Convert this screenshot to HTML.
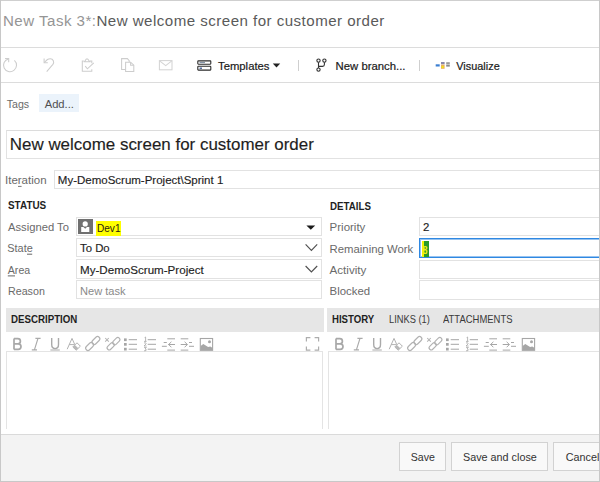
<!DOCTYPE html>
<html><head><meta charset="utf-8"><style>
html,body{margin:0;padding:0;background:#fff;}
body{width:600px;height:482px;position:relative;overflow:hidden;font-family:"Liberation Sans",sans-serif;}
.t{position:absolute;white-space:pre;line-height:20px;}
.r{position:absolute;box-sizing:border-box;}
svg{position:absolute;overflow:visible;}
</style></head><body>
<!-- frame -->
<div class="r" style="left:0;top:0;width:600px;height:1px;background:#cfcfcf"></div>
<div class="r" style="left:0;top:0;width:1px;height:482px;background:#c8c8c8"></div>
<div class="r" style="left:599px;top:0;width:1px;height:482px;background:#c8c8c8;z-index:5"></div>
<div class="r" style="left:1px;top:47px;width:598px;height:1px;background:#dcdcdc"></div>
<div class="r" style="left:1px;top:82px;width:598px;height:1px;background:#dcdcdc"></div>
<!-- footer -->
<div class="r" style="left:1px;top:434px;width:598px;height:47px;background:#f3f3f3;border-top:1px solid #dadada"></div>
<div class="r" style="left:0;top:481px;width:600px;height:1px;background:#c8c8c8"></div>
<div class="r" style="left:399px;top:442px;width:47px;height:29px;background:#f9f9f9;border:1px solid #d2d2d2"></div>
<div class="r" style="left:451px;top:442px;width:97px;height:29px;background:#f9f9f9;border:1px solid #d2d2d2"></div>
<div class="r" style="left:553px;top:442px;width:60px;height:29px;background:#f9f9f9;border:1px solid #d2d2d2"></div>
<!-- tags add -->
<div class="r" style="left:39px;top:94px;width:40px;height:18px;background:#ebf3fb"></div>
<!-- title input -->
<div class="r" style="left:6px;top:130px;width:600px;height:29px;border:1px solid #e2e2e2;border-top-color:#dcdcdc"></div>
<!-- iteration -->
<div class="r" style="left:54px;top:170px;width:560px;height:19px;border:1px solid #e2e2e2"></div>
<!-- status boxes -->
<div class="r" style="left:76px;top:217px;width:246px;height:19px;border:1px solid #e2e2e2"></div>
<div class="r" style="left:76px;top:238px;width:246px;height:19px;border:1px solid #e2e2e2"></div>
<div class="r" style="left:76px;top:259px;width:246px;height:20px;border:1px solid #e2e2e2"></div>
<div class="r" style="left:76px;top:280px;width:246px;height:19px;border:1px solid #e2e2e2"></div>
<!-- details boxes -->
<div class="r" style="left:419px;top:217px;width:200px;height:19px;border:1px solid #e2e2e2"></div>
<div class="r" style="left:419px;top:238px;width:200px;height:20px;border:1px solid #2f88e2;box-shadow:inset 0 0 0 1px rgba(47,136,226,0.5)"></div>
<div class="r" style="left:419px;top:260px;width:200px;height:19px;border:1px solid #e2e2e2"></div>
<div class="r" style="left:419px;top:280px;width:200px;height:20px;border:1px solid #e2e2e2"></div>
<!-- selection 8 -->
<div class="r" style="left:422px;top:241px;width:6.6px;height:16px;background:#2a9a28"></div>
<div class="r" style="left:422px;top:241px;width:1.6px;height:16px;background:#f2f200"></div>
<svg style="left:0;top:0" width="600" height="300"><text x="0" y="0" font-family="Liberation Sans" font-size="11.5" font-weight="700" fill="#f0f010" transform="translate(422.4 254.4) scale(0.78 1)">8</text></svg>
<!-- assigned avatar + highlight -->
<div class="r" style="left:78px;top:219px;width:15px;height:15px;background:#707070"></div>
<svg style="left:78px;top:219px" width="15" height="15"><circle cx="7.2" cy="4.9" r="2.6" fill="#fff"/><path d="M3.2 13 V8.1 H5.4 L7.2 9.7 L9 8.1 H11.3 V13 Z" fill="#fff"/></svg>
<div class="r" style="left:95.5px;top:221px;width:25px;height:15px;background:#ffff00"></div>
<!-- dropdown carets -->
<svg style="left:0;top:0" width="600" height="300">
 <path d="M306.4 225.5 H315.2 L310.8 229.8 Z" fill="#1a1a1a"/>
 <path d="M305.6 244.4 L311.4 250.4 L317.2 244.4" stroke="#505050" stroke-width="1.15" fill="none"/>
 <path d="M305.6 266.0 L311.4 272.0 L317.2 266.0" stroke="#505050" stroke-width="1.15" fill="none"/>
 <!-- accelerator underlines -->
 <path d="M18 186.4 H21.6" stroke="#777" stroke-width="1"/>
 <path d="M27 254.2 H32.2" stroke="#666" stroke-width="1"/>
 <path d="M7.8 275.9 H15" stroke="#666" stroke-width="1"/>
</svg>
<!-- section headers -->
<div class="r" style="left:6px;top:308px;width:318px;height:24px;background:#e6e6e6"></div>
<div class="r" style="left:327px;top:308px;width:272px;height:24px;background:#e6e6e6"></div>
<!-- editor boxes -->
<div class="r" style="left:6px;top:351px;width:317px;height:78px;border:1px solid #e4e4e4;border-bottom:none"></div>
<div class="r" style="left:328px;top:351px;width:280px;height:78px;border:1px solid #e4e4e4;border-bottom:none"></div>
<!-- separators toolbar -->
<div class="r" style="left:298px;top:60px;width:1px;height:11px;background:#cfcfcf"></div>
<div class="r" style="left:419px;top:60px;width:1px;height:11px;background:#cfcfcf"></div>
<!-- toolbar icons -->
<svg style="left:0;top:0" width="600" height="90">
 <g fill="none" stroke="#cdcdcd" stroke-width="1.05">
  <!-- refresh -->
  <path d="M14.4 60.4 A6.5 6.5 0 1 1 8.4 58.9"/>
  <path d="M5 58.5 H8.7 V62.3"/>
  <!-- undo -->
  <path d="M44.4 62.3 L47.4 59.5 Q48.6 58.7 50.4 58.7 A3.3 3.5 0 0 1 52.9 64.4 L46.7 71.6"/>
  <path d="M44.1 58.4 V62.7 H47.8"/>
  <!-- clipboard -->
  <path d="M83.8 60.9 H82.3 V71.3 H91.8 V69.2"/>
  <path d="M90 60.9 H91.8 V63.2"/>
  <path d="M83.6 61.7 H90.6 M84.6 61.5 L86.3 58.9 H87.7 L89.6 61.5"/>
  <path d="M85.2 66.2 L87.4 68.8 L93.8 62.8"/>
  <!-- copy -->
  <path d="M125.6 69.4 H121.6 V58.6 H127.4 L129.2 60.6 V62.2"/>
  <path d="M125.6 62.2 H130.6 L133.8 65.2 V71.4 H125.6 Z"/>
  <path d="M130.6 62.2 V65.2 H133.8"/>
  <!-- mail -->
  <rect x="159.4" y="60.6" width="12.6" height="9.2" stroke="#d4d4d4"/>
  <path d="M159.6 60.8 L165.7 65.6 L171.8 60.8" stroke="#d4d4d4"/>
 </g>
 <!-- templates icon -->
 <g fill="none" stroke="#2a2a2a" stroke-width="1.1">
  <rect x="197.8" y="60.9" width="13" height="3.3" rx="0.6"/>
  <rect x="197.8" y="66.3" width="13" height="3.8" rx="0.6"/>
 </g>
 <path d="M199.6 62.6 H205" stroke="#7a8aa0" stroke-width="1"/>
 <path d="M199.6 68.2 H202" stroke="#2a4a8a" stroke-width="1.2"/>
 <!-- caret -->
 <path d="M272.8 63.6 H280.2 L276.5 67.4 Z" fill="#222"/>
 <!-- branch -->
 <g fill="none" stroke="#333" stroke-width="1.1">
  <circle cx="318.5" cy="60.6" r="1.65"/>
  <circle cx="324.4" cy="60.6" r="1.65"/>
  <circle cx="318.5" cy="69.6" r="1.65"/>
  <path d="M318.5 62.3 V67.9"/>
  <path d="M324.4 62.3 V64.6 Q324.4 66.4 322.6 66.4 H318.5"/>
 </g>
 <!-- visualize -->
 <rect x="435.7" y="64.3" width="4" height="2.2" fill="#3b7fd2"/>
 <rect x="441" y="62" width="3.6" height="2.3" fill="#8a88a8"/>
 <rect x="441" y="64.6" width="3.6" height="4.2" fill="#e8b060"/>
 <circle cx="442.6" cy="67" r="1" fill="#f4f000"/>
 <rect x="446.2" y="62.2" width="3.6" height="2" fill="#9a9a9a"/>
 <rect x="446.2" y="64.6" width="3.6" height="2" fill="#8a8a8a"/>
</svg>
<!-- editor toolbars -->
<svg style="left:0;top:330px" width="600" height="24">
 <g>
   <path d="M14 8.6 V19.4 M14 8.6 H17.8 Q20.4 8.6 20.4 11.2 Q20.4 13.8 17.8 13.8 H14 M14 13.8 H18.2 Q21 13.8 21 16.6 Q21 19.4 18.2 19.4 H14" stroke="#a8a8a8" stroke-width="1.7" fill="none"/>
   <path d="M35.4 8.4 H40.6 M31.8 19.8 H37 M38 8.4 L34.4 19.8" stroke="#aaaaaa" stroke-width="1.15" fill="none"/>
   <path d="M51.7 8 V14.6 Q51.7 18.6 55.1 18.6 Q58.5 18.6 58.5 14.6 V8" stroke="#aaaaaa" stroke-width="1.4" fill="none"/>
   <path d="M50.4 20 H59.8" stroke="#aaaaaa" stroke-width="1"/>
   <path d="M67.2 19.2 L72 8.4 L75.6 16.4 M69.2 14.6 H74" stroke="#b2b2b2" stroke-width="1" fill="none"/>
   <path d="M72.8 17 L77 12.8 L80.4 16.2 L76.2 20.2 Z" stroke="#b2b2b2" stroke-width="1" fill="#fff"/>
   <path d="M72.8 17 L74.9 14.9 L78.3 18.3 L76.2 20.2 Z" fill="#b8b8b8"/>
   <g stroke="#b2b2b2" stroke-width="1.15" fill="none">
    <rect x="87.3" y="11.9" width="4.6" height="9.2" rx="2.3" transform="rotate(45 89.6 16.5)"/>
    <rect x="93.6" y="5.9" width="4.6" height="9.2" rx="2.3" transform="rotate(45 95.9 10.5)"/>
    <rect x="108.6" y="12.1" width="4.2" height="8.4" rx="2.1" transform="rotate(45 110.7 16.3)"/>
    <rect x="114.2" y="6.9" width="4.2" height="8.4" rx="2.1" transform="rotate(45 116.3 11.1)"/>
    <path d="M105.2 8 L108.8 11.6 M108.8 8 L105.2 11.6" stroke-width="1.05"/>
   </g>
   <g fill="#a6a6a6">
    <rect x="124" y="8.4" width="2.7" height="2.7"/><rect x="124" y="13" width="2.7" height="2.7"/><rect x="124" y="17.8" width="2.7" height="2.7"/>
   </g>
   <path d="M128.7 9.7 H137 M128.7 14.3 H137 M128.7 19.2 H137 M147.7 9.7 H156 M147.7 14.3 H156 M147.7 19.2 H156" stroke="#a6a6a6" stroke-width="1"/>
   <path d="M144.6 7.6 L145.6 7 V11.4 M144 11.4 H146.6 M144 13 Q146.2 12.2 146.2 13.8 L144 16 H146.6 M144 17.6 H146.4 L145 18.8 Q146.8 19 146 20.6 L144 20.8" stroke="#a6a6a6" stroke-width="0.8" fill="none"/>
   <path d="M167.3 8.8 H175 M167.3 20.1 H175 M163.7 12.5 H166.8 M161.9 16.3 H166.8 M168.3 14.5 H175 M171.4 11.8 L168.6 14.5 L171.4 17.3" stroke="#a6a6a6" stroke-width="1" fill="none"/>
   <path d="M180.7 8.8 H188.3 M180.7 20.1 H188.3 M189 12.5 H192 M189 16.3 H194 M180.7 14.5 H187.3 M184.6 11.8 L187.4 14.5 L184.6 17.3" stroke="#a6a6a6" stroke-width="1" fill="none"/>
   <rect x="200.3" y="8.5" width="12.3" height="11.8" stroke="#a6a6a6" stroke-width="1.1" fill="none"/>
   <path d="M200.6 20.2 V16 L203.3 14 L208.1 16.9 L210.2 16.5 L212.4 17.8 V20.2 Z" fill="#a6a6a6"/>
   <circle cx="209.5" cy="11.7" r="1.5" fill="#a6a6a6"/>
</g>
 <g transform="translate(322 0)">
   <path d="M14 8.6 V19.4 M14 8.6 H17.8 Q20.4 8.6 20.4 11.2 Q20.4 13.8 17.8 13.8 H14 M14 13.8 H18.2 Q21 13.8 21 16.6 Q21 19.4 18.2 19.4 H14" stroke="#a8a8a8" stroke-width="1.7" fill="none"/>
   <path d="M35.4 8.4 H40.6 M31.8 19.8 H37 M38 8.4 L34.4 19.8" stroke="#aaaaaa" stroke-width="1.15" fill="none"/>
   <path d="M51.7 8 V14.6 Q51.7 18.6 55.1 18.6 Q58.5 18.6 58.5 14.6 V8" stroke="#aaaaaa" stroke-width="1.4" fill="none"/>
   <path d="M50.4 20 H59.8" stroke="#aaaaaa" stroke-width="1"/>
   <path d="M67.2 19.2 L72 8.4 L75.6 16.4 M69.2 14.6 H74" stroke="#b2b2b2" stroke-width="1" fill="none"/>
   <path d="M72.8 17 L77 12.8 L80.4 16.2 L76.2 20.2 Z" stroke="#b2b2b2" stroke-width="1" fill="#fff"/>
   <path d="M72.8 17 L74.9 14.9 L78.3 18.3 L76.2 20.2 Z" fill="#b8b8b8"/>
   <g stroke="#b2b2b2" stroke-width="1.15" fill="none">
    <rect x="87.3" y="11.9" width="4.6" height="9.2" rx="2.3" transform="rotate(45 89.6 16.5)"/>
    <rect x="93.6" y="5.9" width="4.6" height="9.2" rx="2.3" transform="rotate(45 95.9 10.5)"/>
    <rect x="108.6" y="12.1" width="4.2" height="8.4" rx="2.1" transform="rotate(45 110.7 16.3)"/>
    <rect x="114.2" y="6.9" width="4.2" height="8.4" rx="2.1" transform="rotate(45 116.3 11.1)"/>
    <path d="M105.2 8 L108.8 11.6 M108.8 8 L105.2 11.6" stroke-width="1.05"/>
   </g>
   <g fill="#a6a6a6">
    <rect x="124" y="8.4" width="2.7" height="2.7"/><rect x="124" y="13" width="2.7" height="2.7"/><rect x="124" y="17.8" width="2.7" height="2.7"/>
   </g>
   <path d="M128.7 9.7 H137 M128.7 14.3 H137 M128.7 19.2 H137 M147.7 9.7 H156 M147.7 14.3 H156 M147.7 19.2 H156" stroke="#a6a6a6" stroke-width="1"/>
   <path d="M144.6 7.6 L145.6 7 V11.4 M144 11.4 H146.6 M144 13 Q146.2 12.2 146.2 13.8 L144 16 H146.6 M144 17.6 H146.4 L145 18.8 Q146.8 19 146 20.6 L144 20.8" stroke="#a6a6a6" stroke-width="0.8" fill="none"/>
   <path d="M167.3 8.8 H175 M167.3 20.1 H175 M163.7 12.5 H166.8 M161.9 16.3 H166.8 M168.3 14.5 H175 M171.4 11.8 L168.6 14.5 L171.4 17.3" stroke="#a6a6a6" stroke-width="1" fill="none"/>
   <path d="M180.7 8.8 H188.3 M180.7 20.1 H188.3 M189 12.5 H192 M189 16.3 H194 M180.7 14.5 H187.3 M184.6 11.8 L187.4 14.5 L184.6 17.3" stroke="#a6a6a6" stroke-width="1" fill="none"/>
   <rect x="200.3" y="8.5" width="12.3" height="11.8" stroke="#a6a6a6" stroke-width="1.1" fill="none"/>
   <path d="M200.6 20.2 V16 L203.3 14 L208.1 16.9 L210.2 16.5 L212.4 17.8 V20.2 Z" fill="#a6a6a6"/>
   <circle cx="209.5" cy="11.7" r="1.5" fill="#a6a6a6"/>
</g>
 <path d="M306.4 341.5 V337.6 H310.4 M314.6 337.6 H318.6 V341.5 M318.6 346.4 V350.2 H314.6 M310.4 350.2 H306.4 V346.4" transform="translate(0 -330)" stroke="#adadad" stroke-width="1.2" fill="none"/>
</svg>

<div class="t" style="left:3.00px;top:11.30px;font-size:15.1px;font-weight:400;color:#555;letter-spacing:0.47px;"><span style="color:#959595">New Task 3*:</span><span style="color:#5a5a5a">New welcome screen for customer order</span></div>
<div class="t" style="left:218.00px;top:55.60px;font-size:11.31px;font-weight:400;color:#1a1a1a;-webkit-text-stroke:0.2px #1a1a1a;">Templates</div>
<div class="t" style="left:335.60px;top:56.00px;font-size:11.33px;font-weight:400;color:#1a1a1a;-webkit-text-stroke:0.2px #1a1a1a;">New branch...</div>
<div class="t" style="left:456.30px;top:55.60px;font-size:10.9px;font-weight:400;color:#1a1a1a;-webkit-text-stroke:0.2px #1a1a1a;">Visualize</div>
<div class="t" style="left:6.70px;top:93.50px;font-size:10.6px;font-weight:400;color:#6a6a6a;">Tags</div>
<div class="t" style="left:44.70px;top:93.50px;font-size:11.2px;font-weight:400;color:#505050;">Add...</div>
<div class="t" style="left:9.80px;top:135.00px;font-size:16.95px;font-weight:400;color:#1e1e1e;-webkit-text-stroke:0.15px #1e1e1e;">New welcome screen for customer order</div>
<div class="t" style="left:5.00px;top:170.00px;font-size:11.5px;font-weight:400;color:#6a6a6a;">Iteration</div>
<div class="t" style="left:57.80px;top:170.00px;font-size:11.51px;font-weight:400;color:#1e1e1e;-webkit-text-stroke:0.15px #1e1e1e;">My-DemoScrum-Project\Sprint 1</div>
<div class="t" style="left:7.60px;top:195.40px;font-size:10.6px;font-weight:700;color:#1e1e1e;transform:scaleX(0.9370);transform-origin:0 0;">STATUS</div>
<div class="t" style="left:8.00px;top:217.40px;font-size:11.22px;font-weight:400;color:#6a6a6a;">Assigned To</div>
<div class="t" style="left:97.20px;top:217.70px;font-size:11.2px;font-weight:400;color:#2a1a10;transform:scaleX(0.9000);transform-origin:0 0;">Dev1</div>
<div class="t" style="left:7.30px;top:238.20px;font-size:10.9px;font-weight:400;color:#6a6a6a;">State</div>
<div class="t" style="left:80.00px;top:238.20px;font-size:11.35px;font-weight:400;color:#1e1e1e;-webkit-text-stroke:0.15px #1e1e1e;">To Do</div>
<div class="t" style="left:7.80px;top:259.60px;font-size:10.6px;font-weight:400;color:#6a6a6a;">Area</div>
<div class="t" style="left:80.00px;top:259.60px;font-size:11.6px;font-weight:400;color:#1e1e1e;-webkit-text-stroke:0.15px #1e1e1e;">My-DemoScrum-Project</div>
<div class="t" style="left:8.00px;top:280.50px;font-size:10.7px;font-weight:400;color:#6a6a6a;">Reason</div>
<div class="t" style="left:80.00px;top:280.50px;font-size:11.08px;font-weight:400;color:#8a8a8a;">New task</div>
<div class="t" style="left:329.60px;top:196.00px;font-size:10.6px;font-weight:700;color:#1e1e1e;transform:scaleX(0.9190);transform-origin:0 0;">DETAILS</div>
<div class="t" style="left:329.60px;top:217.40px;font-size:11.5px;font-weight:400;color:#6a6a6a;">Priority</div>
<div class="t" style="left:329.60px;top:239.00px;font-size:11.34px;font-weight:400;color:#6a6a6a;">Remaining Work</div>
<div class="t" style="left:329.60px;top:260.00px;font-size:11.6px;font-weight:400;color:#6a6a6a;">Activity</div>
<div class="t" style="left:329.60px;top:280.60px;font-size:11.4px;font-weight:400;color:#6a6a6a;">Blocked</div>
<div class="t" style="left:423.00px;top:217.40px;font-size:11.4px;font-weight:400;color:#1e1e1e;-webkit-text-stroke:0.15px #1e1e1e;">2</div>
<div class="t" style="left:10.80px;top:309.00px;font-size:10.6px;font-weight:700;color:#1e1e1e;transform:scaleX(0.9160);transform-origin:0 0;">DESCRIPTION</div>
<div class="t" style="left:332.40px;top:309.00px;font-size:10.5px;font-weight:700;color:#1e1e1e;transform:scaleX(0.9160);transform-origin:0 0;">HISTORY</div>
<div class="t" style="left:389.40px;top:309.20px;font-size:10.5px;font-weight:400;color:#3a3a3a;transform:scaleX(0.8850);transform-origin:0 0;">LINKS (1)</div>
<div class="t" style="left:443.30px;top:309.20px;font-size:10.5px;font-weight:400;color:#3a3a3a;transform:scaleX(0.9000);transform-origin:0 0;">ATTACHMENTS</div>
<div class="t" style="left:410.70px;top:447.30px;font-size:10.6px;font-weight:400;color:#333;">Save</div>
<div class="t" style="left:463.00px;top:447.30px;font-size:10.8px;font-weight:400;color:#333;">Save and close</div>
<div class="t" style="left:565.70px;top:447.30px;font-size:10.8px;font-weight:400;color:#333;">Cancel</div>
</body></html>
